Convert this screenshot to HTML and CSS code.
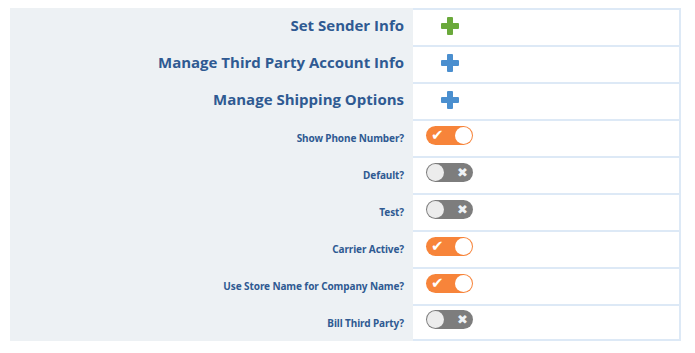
FILE: index.html
```html
<!DOCTYPE html>
<html>
<head>
	<title>carrier settings</title>
	<meta charset="UTF-8">
	<link rel="stylesheet" href="styles.css">
</head>
<body>
	<div class="panel">
		<div class="row">
			<div class="label big">Set Sender Info</div>
			<div class="value"><span class="plus green"></span></div>
		</div>
		<div class="row">
			<div class="label big">Manage Third Party Account Info</div>
			<div class="value"><span class="plus blue"></span></div>
		</div>
		<div class="row">
			<div class="label big">Manage Shipping Options</div>
			<div class="value"><span class="plus blue"></span></div>
		</div>
		<div class="row">
			<div class="label">Show Phone Number?</div>
			<div class="value"><span class="toggle on"><span class="mark">&#10004;</span><span class="knob"></span></span></div>
		</div>
		<div class="row">
			<div class="label">Default?</div>
			<div class="value"><span class="toggle off"><span class="knob"></span><span class="mark">&#10006;</span></span></div>
		</div>
		<div class="row">
			<div class="label">Test?</div>
			<div class="value"><span class="toggle off"><span class="knob"></span><span class="mark">&#10006;</span></span></div>
		</div>
		<div class="row">
			<div class="label">Carrier Active?</div>
			<div class="value"><span class="toggle on"><span class="mark">&#10004;</span><span class="knob"></span></span></div>
		</div>
		<div class="row">
			<div class="label">Use Store Name for Company Name?</div>
			<div class="value"><span class="toggle on"><span class="mark">&#10004;</span><span class="knob"></span></span></div>
		</div>
		<div class="row last">
			<div class="label">Bill Third Party?</div>
			<div class="value"><span class="toggle off"><span class="knob"></span><span class="mark">&#10006;</span></span></div>
		</div>
	</div>
</body>
</html>
```

FILE: styles.css
```css
*{
	margin: 0;
	padding: 0;
	box-sizing: border-box;
}
body{
	background-color: white;
	padding: 8px 14px 0 10px;
	font-family: "Noto Sans", sans-serif;
}
.panel{
	width: 671px;
	background-color: #edf1f4;
}
.row{
	display: flex;
	height: 37px;
}
.label{
	width: 403px;
	display: flex;
	align-items: center;
	justify-content: flex-end;
	padding-right: 9px;
	font-size: 10px;
	font-weight: bold;
	color: #2f5a92;
	letter-spacing: -0.1px;
}
.label.big{
	font-family: "Open Sans", sans-serif;
	font-size: 15px;
	font-weight: bold;
	letter-spacing: 0;
	padding-bottom: 3px;
}
.value{
	flex: 1;
	display: flex;
	align-items: center;
	padding-left: 13px;
	background-color: white;
	border-top: 2px solid #dde9f6;
	border-right: 2px solid #dde9f6;
}
.row.last .value{
	border-bottom: 2px solid #dde9f6;
}
.plus{
	position: relative;
	width: 18px;
	height: 18px;
	margin-left: 15px;
	margin-bottom: 4px;
}
.plus::before, .plus::after{
	content: "";
	position: absolute;
	border-radius: 1px;
}
.plus::before{
	left: 0;
	top: 6px;
	width: 18px;
	height: 6px;
}
.plus::after{
	left: 6px;
	top: 0;
	width: 6px;
	height: 18px;
}
.green::before, .green::after{
	background-color: #6aa93b;
}
.blue::before, .blue::after{
	background-color: #4b8fcf;
}
.toggle{
	display: flex;
	align-items: center;
	justify-content: space-between;
	width: 47px;
	height: 19px;
	border-radius: 10px;
	padding: 1px;
	margin-bottom: 6px;
}
.toggle.on{
	background-color: #f7843a;
	padding-left: 5px;
}
.toggle.off{
	background-color: #7d7d7d;
	padding-right: 5px;
}
.knob{
	width: 17px;
	height: 17px;
	border-radius: 50%;
}
.on .knob{
	background-color: white;
}
.off .knob{
	background-color: #ececec;
}
.mark{
	color: white;
	font-family: "DejaVu Sans", sans-serif;
	font-size: 15px;
	line-height: 1;
}
.off .mark{
	color: #eef2f6;
	font-size: 13px;
}
```
